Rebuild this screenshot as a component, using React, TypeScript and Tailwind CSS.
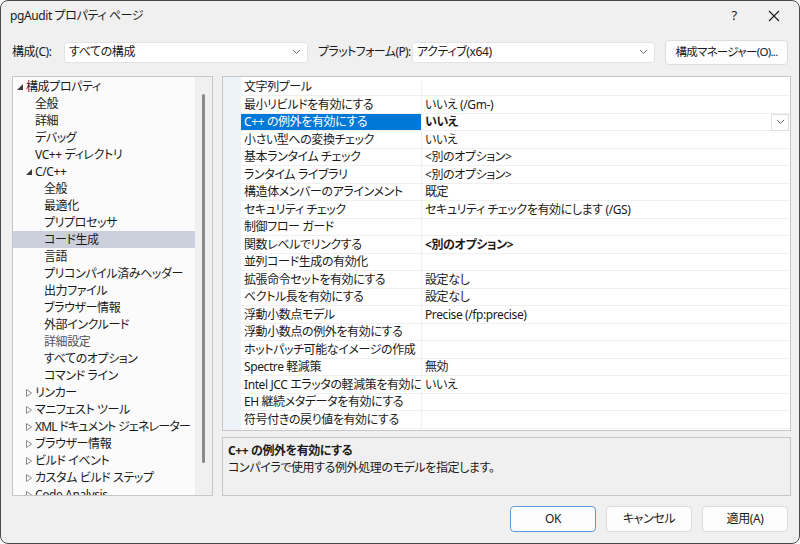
import React from 'react';

const font = { fontFamily: '"Noto Sans", "Noto Sans CJK JP", sans-serif', fontFeatureSettings: '"palt"' };

type TreeItem = { label: string; level: number; arrow?: 'open' | 'closed'; selected?: boolean };

const tree: TreeItem[] = [
    { label: '構成プロパティ', level: 0, arrow: 'open' },
    { label: '全般', level: 1 },
    { label: '詳細', level: 1 },
    { label: 'デバッグ', level: 1 },
    { label: 'VC++ ディレクトリ', level: 1 },
    { label: 'C/C++', level: 1, arrow: 'open' },
    { label: '全般', level: 2 },
    { label: '最適化', level: 2 },
    { label: 'プリプロセッサ', level: 2 },
    { label: 'コード生成', level: 2, selected: true },
    { label: '言語', level: 2 },
    { label: 'プリコンパイル済みヘッダー', level: 2 },
    { label: '出力ファイル', level: 2 },
    { label: 'ブラウザー情報', level: 2 },
    { label: '外部インクルード', level: 2 },
    { label: '詳細設定', level: 2 },
    { label: 'すべてのオプション', level: 2 },
    { label: 'コマンド ライン', level: 2 },
    { label: 'リンカー', level: 1, arrow: 'closed' },
    { label: 'マニフェスト ツール', level: 1, arrow: 'closed' },
    { label: 'XML ドキュメント ジェネレーター', level: 1, arrow: 'closed' },
    { label: 'ブラウザー情報', level: 1, arrow: 'closed' },
    { label: 'ビルド イベント', level: 1, arrow: 'closed' },
    { label: 'カスタム ビルド ステップ', level: 1, arrow: 'closed' },
    { label: 'Code Analysis', level: 1, arrow: 'closed' },
];

const props: { name: string; value: string; bold?: boolean; selected?: boolean }[] = [
    { name: '文字列プール', value: '' },
    { name: '最小リビルドを有効にする', value: 'いいえ (/Gm-)' },
    { name: 'C++ の例外を有効にする', value: 'いいえ', bold: true, selected: true },
    { name: '小さい型への変換チェック', value: 'いいえ' },
    { name: '基本ランタイム チェック', value: '<別のオプション>' },
    { name: 'ランタイム ライブラリ', value: '<別のオプション>' },
    { name: '構造体メンバーのアラインメント', value: '既定' },
    { name: 'セキュリティ チェック', value: 'セキュリティ チェックを有効にします (/GS)' },
    { name: '制御フロー ガード', value: '' },
    { name: '関数レベルでリンクする', value: '<別のオプション>', bold: true },
    { name: '並列コード生成の有効化', value: '' },
    { name: '拡張命令セットを有効にする', value: '設定なし' },
    { name: 'ベクトル長を有効にする', value: '設定なし' },
    { name: '浮動小数点モデル', value: 'Precise (/fp:precise)' },
    { name: '浮動小数点の例外を有効にする', value: '' },
    { name: 'ホットパッチ可能なイメージの作成', value: '' },
    { name: 'Spectre 軽減策', value: '無効' },
    { name: 'Intel JCC エラッタの軽減策を有効にする', value: 'いいえ' },
    { name: 'EH 継続メタデータを有効にする', value: '' },
    { name: '符号付きの戻り値を有効にする', value: '' },
];

const Chevron = () => (
    <svg width="9" height="6" viewBox="0 0 9 6" className="shrink-0">
        <polyline points="1,1 4.5,4.5 8,1" fill="none" stroke="#6b6b6b" strokeWidth="1" />
    </svg>
);

const Combo = ({ text, width }: { text: string; width: string }) => (
    <div className={`${width} h-[21px] bg-white border border-[#e3e3e3] rounded-[3px] flex items-center pl-[4px] pr-[6px] shrink-0`}>
        <span className="flex-1 text-[12px] text-[#1a1a1a] whitespace-nowrap">{text}</span>
        <Chevron />
    </div>
);

const Arrow = ({ kind }: { kind: 'open' | 'closed' }) =>
    kind === 'open' ? (
        <svg width="6" height="6" viewBox="0 0 6 6" className="shrink-0"><polygon points="6,0 6,6 0,6" fill="#3a3a3a" /></svg>
    ) : (
        <svg width="6" height="8" viewBox="0 0 6 8" className="shrink-0"><polygon points="0.5,0.5 5.5,4 0.5,7.5" fill="none" stroke="#8a8a8a" strokeWidth="1" /></svg>
    );

const Btn = ({ label, primary }: { label: string; primary?: boolean }) => (
    <div className={`w-[86px] h-[26px] rounded-[4px] flex items-center justify-center text-[12px] text-[#1a1a1a] ${primary ? 'bg-[#fdfdfd] border border-[#5f9ad6]' : 'bg-[#fdfdfd] border border-[#dcdcdc]'}`}>
        {label}
    </div>
);

export default function App() {
    return (
        <div style={font} className="w-[800px] h-[544px] bg-[#f0f0f0] border border-[#4a4a4a] rounded-[8px] overflow-hidden flex flex-col text-[#1a1a1a] tracking-[-0.4px]">
            {/* title bar */}
            <div className="h-[29px] flex items-center pl-[9px] shrink-0">
                <span className="text-[12px] flex-1">pgAudit プロパティ ページ</span>
                <span className="text-[13px] w-[20px] text-center mr-[24px]">?</span>
                <svg width="12" height="12" viewBox="0 0 12 12" className="mr-[19px]">
                    <path d="M1 1 L11 11 M11 1 L1 11" stroke="#1a1a1a" strokeWidth="1.1" />
                </svg>
            </div>

            {/* configuration row */}
            <div className="h-[24px] mt-[10px] flex items-center pl-[11px] shrink-0 whitespace-nowrap">
                <span className="text-[12px] w-[52px] shrink-0">構成(C):</span>
                <Combo text="すべての構成" width="w-[244px]" />
                <span className="text-[12px] ml-[10px] w-[94px] shrink-0 tracking-[-0.6px]">プラットフォーム(P):</span>
                <Combo text="アクティブ(x64)" width="w-[243px]" />
                <div className="ml-[10px] w-[123px] h-[25px] bg-[#fdfdfd] border border-[#dcdcdc] rounded-[4px] flex items-center justify-center text-[11.5px] tracking-[-0.7px] shrink-0">
                    構成マネージャー(O)...
                </div>
            </div>

            {/* main */}
            <div className="flex mt-[12px] pl-[11px] gap-[9px] shrink-0">
                {/* tree */}
                <div className="w-[201px] h-[420px] border border-[#c6c6c6] bg-[#fbfbfb] flex overflow-hidden">
                    <div className="flex-1 pt-[1px] overflow-hidden">
                        {tree.map((t, i) => (
                            <div
                                key={i}
                                className={`h-[17px] flex items-center text-[12px] leading-none whitespace-nowrap ${t.selected ? 'bg-[#ccd0dc]' : ''}`}
                            >
                                <div
                                    className="flex items-center justify-end shrink-0 pr-[3px]"
                                    style={{ width: t.level === 0 ? 13 : t.level === 1 ? 22 : 31 }}
                                >
                                    {t.arrow && <Arrow kind={t.arrow} />}
                                </div>
                                <span className={`${t.label === '詳細設定' ? 'text-[#555]' : ''} ${t.label.length > 16 ? 'tracking-[-0.8px]' : ''}`}>{t.label}</span>
                            </div>
                        ))}
                    </div>
                    <div className="w-[17px] bg-[#f0f0f0] flex justify-center pt-[17px] shrink-0">
                        <div className="w-[3px] h-[369px] bg-[#8a8a8a] rounded-full" />
                    </div>
                </div>

                {/* right column */}
                <div className="w-[569px] flex flex-col">
                    <div className="h-[355px] border border-[#c6c6c6] bg-white flex overflow-hidden">
                        <div className="w-[18px] bg-[#eef3fa] shrink-0" />
                        <div className="flex-1 pt-[1.5px]">
                            {props.map((p, i) => (
                                <div key={i} className="h-[17.5px] flex border-b border-[#f0f0f0] text-[12px] leading-none">
                                    <div className={`w-[181px] shrink-0 flex items-center pl-[3px] pt-[1px] border-r border-[#f0f0f0] whitespace-nowrap overflow-hidden ${p.selected ? 'bg-[#0078d7] text-white' : ''}`}>
                                        {p.name}
                                    </div>
                                    <div className={`flex-1 flex items-center pl-[3px] pt-[1px] whitespace-nowrap ${p.bold ? 'font-bold' : ''}`}>
                                        <span className="flex-1">{p.value}</span>
                                        {p.selected && (
                                            <div className="w-[18px] h-[17px] border border-[#dedede] bg-white flex items-center justify-center mr-[1px]">
                                                <Chevron />
                                            </div>
                                        )}
                                    </div>
                                </div>
                            ))}
                        </div>
                    </div>
                    <div className="h-[59px] mt-[6px] border border-[#c6c6c6] bg-[#f0f0f0] px-[5px] pt-[4px] text-[12px]">
                        <div className="font-bold leading-[17px]">C++ の例外を有効にする</div>
                        <div className="leading-[17px]">コンパイラで使用する例外処理のモデルを指定します。</div>
                    </div>
                </div>
            </div>

            {/* buttons */}
            <div className="flex justify-end gap-[10px] pr-[11px] mt-[10px]">
                <Btn label="OK" primary />
                <Btn label="キャンセル" />
                <Btn label="適用(A)" />
            </div>
        </div>
    );
}
